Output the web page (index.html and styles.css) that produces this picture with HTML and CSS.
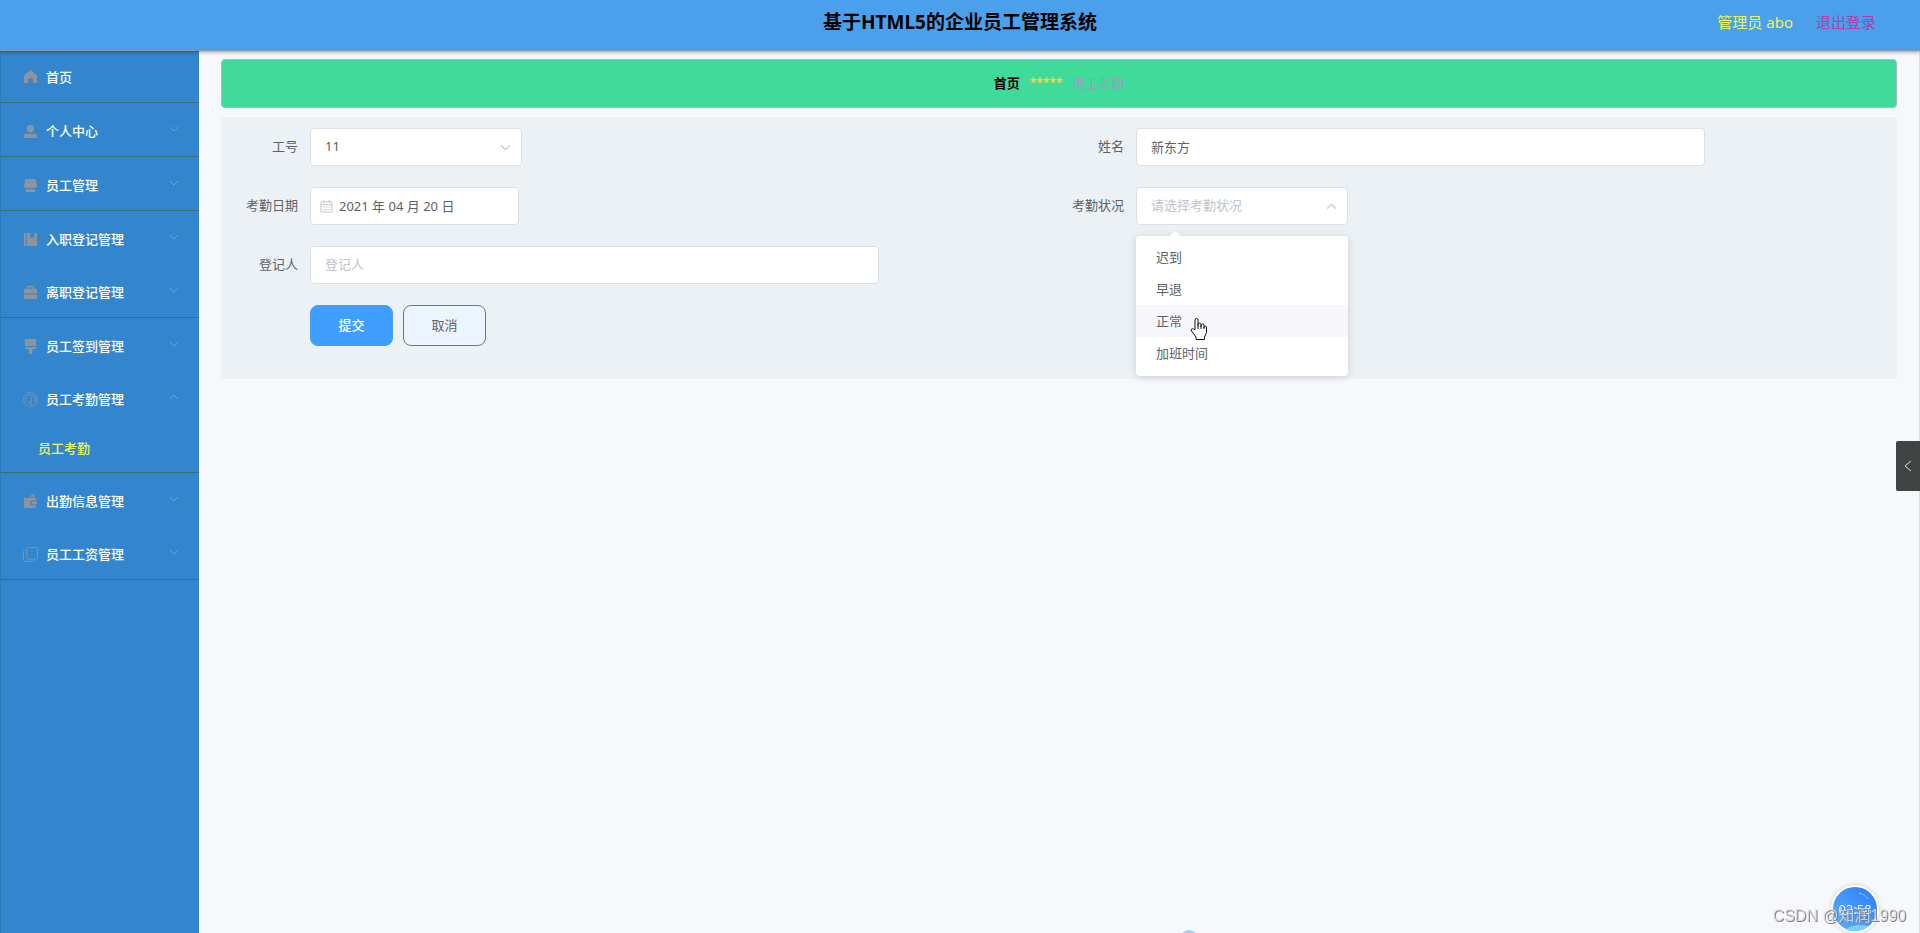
FILE: index.html
```html
<!DOCTYPE html>
<html lang="zh-CN">
<head>
    <meta charset="UTF-8">
    <meta name="viewport" content="width=device-width, initial-scale=1.0">
    <title>基于HTML5的企业员工管理系统</title>
    <link rel="stylesheet" href="styles.css">
</head>
<body>
    <header class="header">
        <h1>基于HTML5的企业员工管理系统</h1>
        <div class="user">
            <span class="user-name">管理员 abo</span>
            <a class="logout" href="#">退出登录</a>
        </div>
    </header>
    <div class="layout">
        <nav class="sidebar">
            <a class="item home line" href="#">
                <svg class="icon" viewBox="0 0 16 16"><path d="M8 1 1 7V15H5.500V10h5v5H15V7z"/></svg>
                <span>首页</span>
            </a>
            <a class="item line" href="#">
                <svg class="icon" viewBox="0 0 16 16"><circle cx="8" cy="5" r="4"/><path d="M1 15v-2.500a2 2 0 0 1 2-2h10a2 2 0 0 1 2 2V15z"/></svg>
                <span>个人中心</span>
                <svg class="arrow" viewBox="0 0 10 6"><path d="M1 1l4 4 4-4"/></svg>
            </a>
            <a class="item line" href="#">
                <svg class="icon" viewBox="0 0 16 16"><path d="M2.500 1h11L15 8.500a2 2 0 0 1-3.500 1.500 2.300 2.300 0 0 1-3.500 0 2.300 2.300 0 0 1-3.500 0A2 2 0 0 1 1 8.500z"/><path d="M3 12h10v3H3z"/></svg>
                <span>员工管理</span>
                <svg class="arrow" viewBox="0 0 10 6"><path d="M1 1l4 4 4-4"/></svg>
            </a>
            <a class="item" href="#">
                <svg class="icon" viewBox="0 0 16 16"><path d="M1 1h2v14H1zM4 1h4v6l2-1.500L12 7V1h3v14H4z"/></svg>
                <span>入职登记管理</span>
                <svg class="arrow" viewBox="0 0 10 6"><path d="M1 1l4 4 4-4"/></svg>
            </a>
            <a class="item line" href="#">
                <svg class="icon" viewBox="0 0 16 16"><path d="M4.500 4V1h7v3H15v5H1V4zM6 4h4V2.500H6zM1 10h14v5H1z"/></svg>
                <span>离职登记管理</span>
                <svg class="arrow" viewBox="0 0 10 6"><path d="M1 1l4 4 4-4"/></svg>
            </a>
            <a class="item" href="#">
                <svg class="icon" viewBox="0 0 16 16"><path d="M2 0h12v7.500H2zM2 8.500h12V11h-4v4a1 1 0 0 1-1 1H7a1 1 0 0 1-1-1v-4H2z"/></svg>
                <span>员工签到管理</span>
                <svg class="arrow" viewBox="0 0 10 6"><path d="M1 1l4 4 4-4"/></svg>
            </a>
            <a class="item" href="#">
                <svg class="icon outline" viewBox="0 0 16 16"><circle cx="8" cy="8" r="7.500"/><path d="M3.500 11A5.300 5.300 0 1 1 12.500 11M8.500 10l1-5"/><circle cx="8" cy="11.500" r="1.500"/></svg>
                <span>员工考勤管理</span>
                <svg class="arrow" viewBox="0 0 10 6"><path d="M1 5l4-4 4 4"/></svg>
            </a>
            <a class="sub line" href="#">员工考勤</a>
            <a class="item" href="#">
                <svg class="icon" viewBox="0 0 16 16"><path d="M6 3l5-3 2 3zM1 4h13v3h-4a2.500 2.500 0 0 0 0 5h4v3H1z"/><path d="M10.500 8H15v3h-4.500a1.500 1.500 0 0 1 0-3z"/></svg>
                <span>出勤信息管理</span>
                <svg class="arrow" viewBox="0 0 10 6"><path d="M1 1l4 4 4-4"/></svg>
            </a>
            <a class="item line" href="#">
                <svg class="icon outline" viewBox="0 0 16 16"><rect x="4" y="0.500" width="11.500" height="12.500" rx="2"/><path d="M2.500 3C1 3 .5 4 .5 5v8.500a2 2 0 0 0 2 2H11c1 0 2-.5 2-1.500"/></svg>
                <span>员工工资管理</span>
                <svg class="arrow" viewBox="0 0 10 6"><path d="M1 1l4 4 4-4"/></svg>
            </a>
        </nav>
        <main class="main">
            <div class="breadcrumb">
                <a class="crumb-home" href="#">首页</a>
                <span class="crumb-sep">*****</span>
                <span class="crumb-now">员工考勤</span>
            </div>
            <form class="form">
                <div class="field">
                    <label for="gonghao">工号</label>
                    <div class="select">
                        <select id="gonghao"><option>11</option></select>
                        <svg class="caret" viewBox="0 0 10 6"><path d="M1 1l4 4 4-4"/></svg>
                    </div>
                </div>
                <div class="field">
                    <label for="xingming">姓名</label>
                    <input class="text" id="xingming" type="text" value="新东方">
                </div>
                <div class="field">
                    <label for="riqi">考勤日期</label>
                    <div class="date">
                        <svg class="calendar" viewBox="0 0 14 14"><path d="M1 2h12v11H1zM1 5h12M4 0v3M10 0v3M3 7.500h2M6 7.500h2M9 7.500h2M3 10.500h2M6 10.500h2M9 10.500h2"/></svg>
                        <input id="riqi" type="text" value="2021 年 04 月 20 日">
                    </div>
                </div>
                <div class="field">
                    <label for="zhuangkuang">考勤状况</label>
                    <div class="select empty">
                        <select id="zhuangkuang"><option>请选择考勤状况</option></select>
                        <svg class="caret" viewBox="0 0 10 6"><path d="M1 5l4-4 4 4"/></svg>
                        <ul class="menu">
                            <li>迟到</li>
                            <li>早退</li>
                            <li class="hover">正常
                                <svg class="pointer" viewBox="0 0 18 24"><path d="M5 13V3a1.500 1.500 0 0 1 3 0v6V7.500a1.500 1.500 0 0 1 3 0V10 8.500a1.500 1.500 0 0 1 3 0V11v-1a1.300 1.300 0 0 1 2.500 0v5.500l-2 4.500v2.500H6V20l-4.500-6C.5 12.500 2 11 3.500 12zM8 9v3M11 10v2M14 11v1"/></svg>
                            </li>
                            <li>加班时间</li>
                        </ul>
                    </div>
                </div>
                <div class="field wide">
                    <label for="dengjiren">登记人</label>
                    <input class="text" id="dengjiren" type="text" placeholder="登记人">
                </div>
                <div class="actions">
                    <button class="submit" type="button">提交</button>
                    <button class="cancel" type="button">取消</button>
                </div>
            </form>
        </main>
    </div>
    <button class="drawer" type="button" aria-label="展开">
        <svg viewBox="0 0 8 12"><path d="M7 1L1 6l6 5"/></svg>
    </button>
    <div class="dot"></div>
    <div class="timer">
        <svg viewBox="0 0 44 44"><path class="wave" d="M12 42Q24 36 36 39Q30 44 22 44T12 42z"/><path class="shine" d="M26 6q6 1 9 6"/></svg>
        <span>02:58</span>
    </div>
    <div class="watermark">CSDN @知润1990</div>
</body>
</html>
```
FILE: styles.css
```css
* {
    box-sizing: border-box;
}
body {
    margin: 0;
    min-height: 100vh;
    display: flex;
    flex-direction: column;
    overflow: hidden;
    background: #f6f8fc;
    color: #606266;
    font-family: "Noto Sans", "Noto Sans CJK SC", sans-serif;
    font-size: 13px;
    line-height: 20px;
}
a {
    color: inherit;
    text-decoration: none;
}
input, select, button {
    font: inherit;
    color: inherit;
    outline: none;
}
svg {
    display: block;
}

/* header */
.header {
    position: relative;
    z-index: 2;
    display: grid;
    grid-template-columns: 1fr auto 1fr;
    align-items: center;
    height: 51px;
    padding: 0 44px 7px;
    background: #4aa0eb;
    border-bottom: 1px solid #8496aa;
    box-shadow: 0 1px 4px rgba(0, 0, 0, 0.4);
}
.header h1 {
    grid-column: 2;
    margin: 0;
    color: #000;
    font-size: 19px;
    font-weight: bold;
}
.user {
    display: flex;
    justify-content: flex-end;
    gap: 23px;
    font-size: 15px;
}
.user-name {
    color: #ebf65c;
}
.logout {
    color: #b33ca8;
}

/* sidebar */
.layout {
    flex: 1;
    display: flex;
}
.sidebar {
    width: 199px;
    background: #3386ce;
    border-left: 1px solid #2f78b8;
    color: #fff;
    font-weight: 500;
}
.item {
    display: flex;
    align-items: center;
    height: 53px;
    padding: 3px 20px 0 22px;
}
.item.line {
    height: 54px;
}
.item.home {
    height: 52px;
    padding-top: 0;
}
.line {
    border-bottom: 1px solid #35706f;
}
.icon {
    width: 15px;
    height: 15px;
    margin-right: 8px;
    fill: #909399;
}
.icon.outline {
    fill: none;
    stroke: #8095ac;
}
.arrow {
    width: 10px;
    height: 6px;
    margin: 0 0 5px auto;
    fill: none;
    stroke: #74a0c8;
}
.sub {
    display: block;
    height: 49px;
    padding-left: 37px;
    line-height: 48px;
    color: #eaf65b;
}

/* content */
.main {
    flex: 1;
    padding: 8px 22px 0;
    border-right: 1px solid #d9dce1;
}
.breadcrumb {
    display: flex;
    justify-content: center;
    align-items: center;
    gap: 10px;
    height: 49px;
    margin-bottom: 9px;
    padding-bottom: 1px;
    background: #40db9a;
    border: 1px solid #9fc2b4;
    border-radius: 4px;
}
.crumb-home {
    color: #000;
    font-weight: bold;
}
.crumb-sep {
    color: #f4d43c;
    font-size: 12px;
    font-weight: bold;
}
.crumb-now {
    color: #8ea5b8;
}
.form {
    display: grid;
    grid-template-columns: 1fr 1fr;
    row-gap: 21px;
    padding: 11px 12px 33px;
    background: #ecf1f5;
}
.field {
    display: grid;
    grid-template-columns: 77px 1fr;
    align-items: center;
    height: 38px;
}
.field label {
    padding: 0 12px 2px 0;
    text-align: right;
    white-space: nowrap;
}
.wide, .actions {
    grid-column: 1 / 3;
}
.wide {
    width: 50%;
}
.text, .select select, .date {
    height: 38px;
    background: #fff;
    border: 1px solid #dcdfe6;
    border-radius: 4px;
}
.text {
    width: 76%;
    padding: 0 14px 2px;
}
.text::placeholder {
    color: #c0c4cc;
}
.select {
    position: relative;
    width: 212px;
}
.select select {
    display: block;
    width: 100%;
    padding: 0 14px 2px;
    appearance: none;
}
.empty select {
    color: #c0c4cc;
}
.caret {
    position: absolute;
    top: 16px;
    right: 11px;
    width: 11px;
    height: 7px;
    fill: none;
    stroke: #c0c4cc;
    pointer-events: none;
}
.date {
    display: flex;
    align-items: center;
    gap: 6px;
    width: 209px;
    padding: 0 9px;
}
.date input {
    width: 100%;
    padding: 0;
    border: none;
    background: none;
}
.calendar {
    flex: none;
    width: 13px;
    height: 13px;
    fill: none;
    stroke: #c0c4cc;
}
.menu {
    position: absolute;
    z-index: 3;
    top: 49px;
    left: 0;
    width: 100%;
    margin: 0;
    padding: 5px 0 7px;
    list-style: none;
    background: #fff;
    border-radius: 4px;
    box-shadow: 0 1px 8px rgba(0, 0, 0, 0.15);
}
.menu::before {
    content: "";
    position: absolute;
    top: -5px;
    left: 34px;
    border: 5px solid transparent;
    border-top: 0;
    border-bottom-color: #fff;
}
.menu li {
    position: relative;
    padding: 0 20px;
    line-height: 32px;
}
.menu .hover {
    background: #f6f6fb;
}
.pointer {
    position: absolute;
    top: 12px;
    left: 54px;
    width: 18px;
    height: 24px;
    fill: #fff;
    stroke: #111;
}
.actions {
    display: flex;
    gap: 10px;
    padding-left: 77px;
}
.actions button {
    width: 83px;
    height: 41px;
    padding: 0 0 2px;
    border: 1px solid #409eff;
    border-radius: 8px;
}
.actions .submit {
    background: #409eff;
    color: #fff;
    font-weight: 500;
}
.actions .cancel {
    background: #ecf4ff;
    border-color: #73767c;
}

/* floating widgets */
.drawer {
    position: fixed;
    top: 441px;
    right: 0;
    display: flex;
    align-items: center;
    justify-content: center;
    width: 24px;
    height: 50px;
    padding: 0;
    background: #3f4342;
    border: none;
    border-radius: 2px 0 0 2px;
}
.drawer svg {
    width: 8px;
    height: 12px;
    fill: none;
    stroke: #e4e4e4;
}
.dot {
    position: fixed;
    bottom: -13px;
    left: 62%;
    width: 16px;
    height: 16px;
    margin-left: -9px;
    background: #9fd3f8;
    border-radius: 50%;
}
.timer {
    position: fixed;
    right: 41px;
    bottom: 0;
    display: grid;
    place-items: center;
    width: 48px;
    height: 48px;
    background: linear-gradient(45deg, #5bb2fb, #2b7cf8);
    border: 2px solid #fff;
    border-radius: 50%;
    box-shadow: 0 0 4px rgba(0, 0, 0, 0.2);
    color: #e4f2ff;
}
.timer svg, .timer span {
    grid-area: 1 / 1;
}
.timer svg {
    width: 44px;
    height: 44px;
}
.wave {
    fill: #7ad0fc;
}
.shine {
    fill: none;
    stroke: #a9d4ff;
    stroke-dasharray: 3 1;
}
.watermark {
    position: fixed;
    right: 14px;
    bottom: 5px;
    color: rgba(225, 225, 228, 0.8);
    font-family: "Liberation Sans", "Noto Sans CJK SC", sans-serif;
    font-size: 16px;
    line-height: 24px;
    text-shadow: 1px 1px 0 #808080;
}
```
